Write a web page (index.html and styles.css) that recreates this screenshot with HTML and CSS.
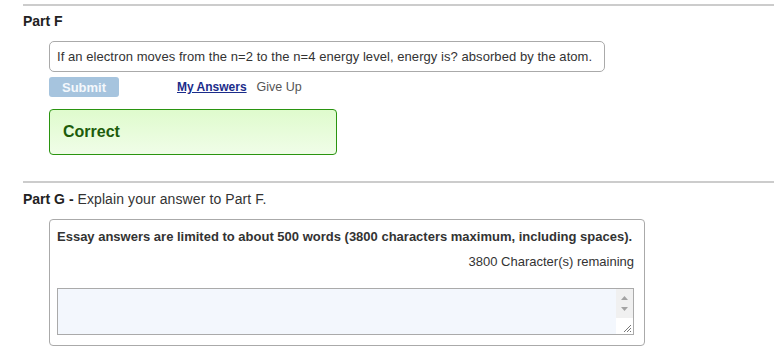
FILE: index.html
```html
<!DOCTYPE html>
<html>
<head>
<meta charset="utf-8">
<link rel="stylesheet" href="styles.css">
</head>
<body>
<div class="page">
  <section class="part">
    <h2 class="part-title">Part F</h2>
    <div class="indent">
      <div class="answer">If an electron moves from the n=2 to the n=4 energy level, energy is? absorbed by the atom.</div>
      <div class="actions">
        <span class="btn">Submit</span>
        <a class="link" href="#">My Answers</a>
        <span class="giveup">Give Up</span>
      </div>
      <div class="correct">Correct</div>
    </div>
  </section>
  <section class="part part-g">
    <h2 class="part-title">Part G - <span class="prompt">Explain your answer to Part F.</span></h2>
    <div class="indent">
      <div class="essay">
        <div class="essay-note">Essay answers are limited to about 500 words (3800 characters maximum, including spaces).</div>
        <div class="remaining">3800 Character(s) remaining</div>
        <div class="textarea">
          <div class="scroll">
            <div class="track">
              <svg class="arrow" width="7" height="4" viewBox="0 0 7 4"><path d="M0 4 L3.5 0 L7 4 Z" fill="#a3a3a3"/></svg>
              <svg class="arrow" width="7" height="4" viewBox="0 0 7 4"><path d="M0 0 L3.5 4 L7 0 Z" fill="#a3a3a3"/></svg>
            </div>
            <div class="corner">
              <svg width="8" height="8" viewBox="0 0 8 8"><path d="M1 8 L8 1 M4 8 L8 4 M7 8 L8 7" stroke="#777" stroke-width="1"/></svg>
            </div>
          </div>
        </div>
      </div>
    </div>
  </section>
</div>
</body>
</html>
```
FILE: styles.css
```css
html, body { margin: 0; padding: 0; background: #fff; }
body { font-family: "Liberation Sans", Arial, sans-serif; color: #333; }
.page { padding-top: 4px; padding-left: 23px; }
.part { border-top: 2px solid #ccc; }
.part-title { margin: 0; font-size: 14px; font-weight: bold; color: #222; line-height: 16px; padding-top: 7px; }
.prompt { font-weight: normal; color: #333; letter-spacing: 0.1px; }
.indent { padding-left: 26px; }
.answer {
  margin-top: 12px;
  width: 556px; box-sizing: border-box;
  border: 1px solid #aaa;
  border-radius: 5px;
  padding: 7px;
  font-size: 13px;
  line-height: 15px;
  letter-spacing: 0.06px;
  color: #333;
}
.actions { display: flex; align-items: center; margin-top: 5px; height: 20px; }
.btn {
  width: 70px; height: 20px; box-sizing: border-box;
  background: #a6c4de; color: #f4f8fc; font-weight: bold; font-size: 13px;
  border-radius: 3px; display: flex; align-items: center; justify-content: center;
}
.link { margin-left: 58px; color: #1b2c8a; font-weight: bold; font-size: 12px; text-decoration: underline; }
.giveup { margin-left: 10px; color: #555; font-size: 12.5px; }
.correct {
  margin-top: 12px;
  width: 288px; height: 46px; box-sizing: border-box;
  border: 1px solid #2a9410; border-radius: 4px;
  background: linear-gradient(#dffbcd, #f0fde8);
  color: #1d5c0b; font-weight: bold; font-size: 16px;
  padding-left: 13px; display: flex; align-items: center;
}
.part-g { margin-top: 26px; }
.part-g .part-title { padding-top: 8px; }
.essay {
  margin-top: 12px;
  width: 596px; box-sizing: border-box; height: 127px;
  border: 1px solid #aaa; border-radius: 4px;
  padding: 9px 10px 0 7px;
}
.essay-note { font-weight: bold; font-size: 13px; line-height: 15px; color: #333; }
.remaining { text-align: right; font-size: 13px; line-height: 15px; margin-top: 10px; color: #333; }
.textarea {
  margin-top: 19px;
  height: 47px; box-sizing: border-box;
  border: 1px solid #aaa; background: #f3f7fd;
  display: flex; justify-content: flex-end;
}
.scroll { width: 17px; display: flex; flex-direction: column; }
.track { flex: 1; background: #f0f0f0; display: flex; flex-direction: column; align-items: center; padding-top: 7px; gap: 7px; }
.arrow { display: block; }
.corner { width: 17px; height: 16px; background: #fff; display: flex; align-items: flex-end; justify-content: flex-end; }
.corner svg { display: block; margin: 0 2px 2px 0; }
```
